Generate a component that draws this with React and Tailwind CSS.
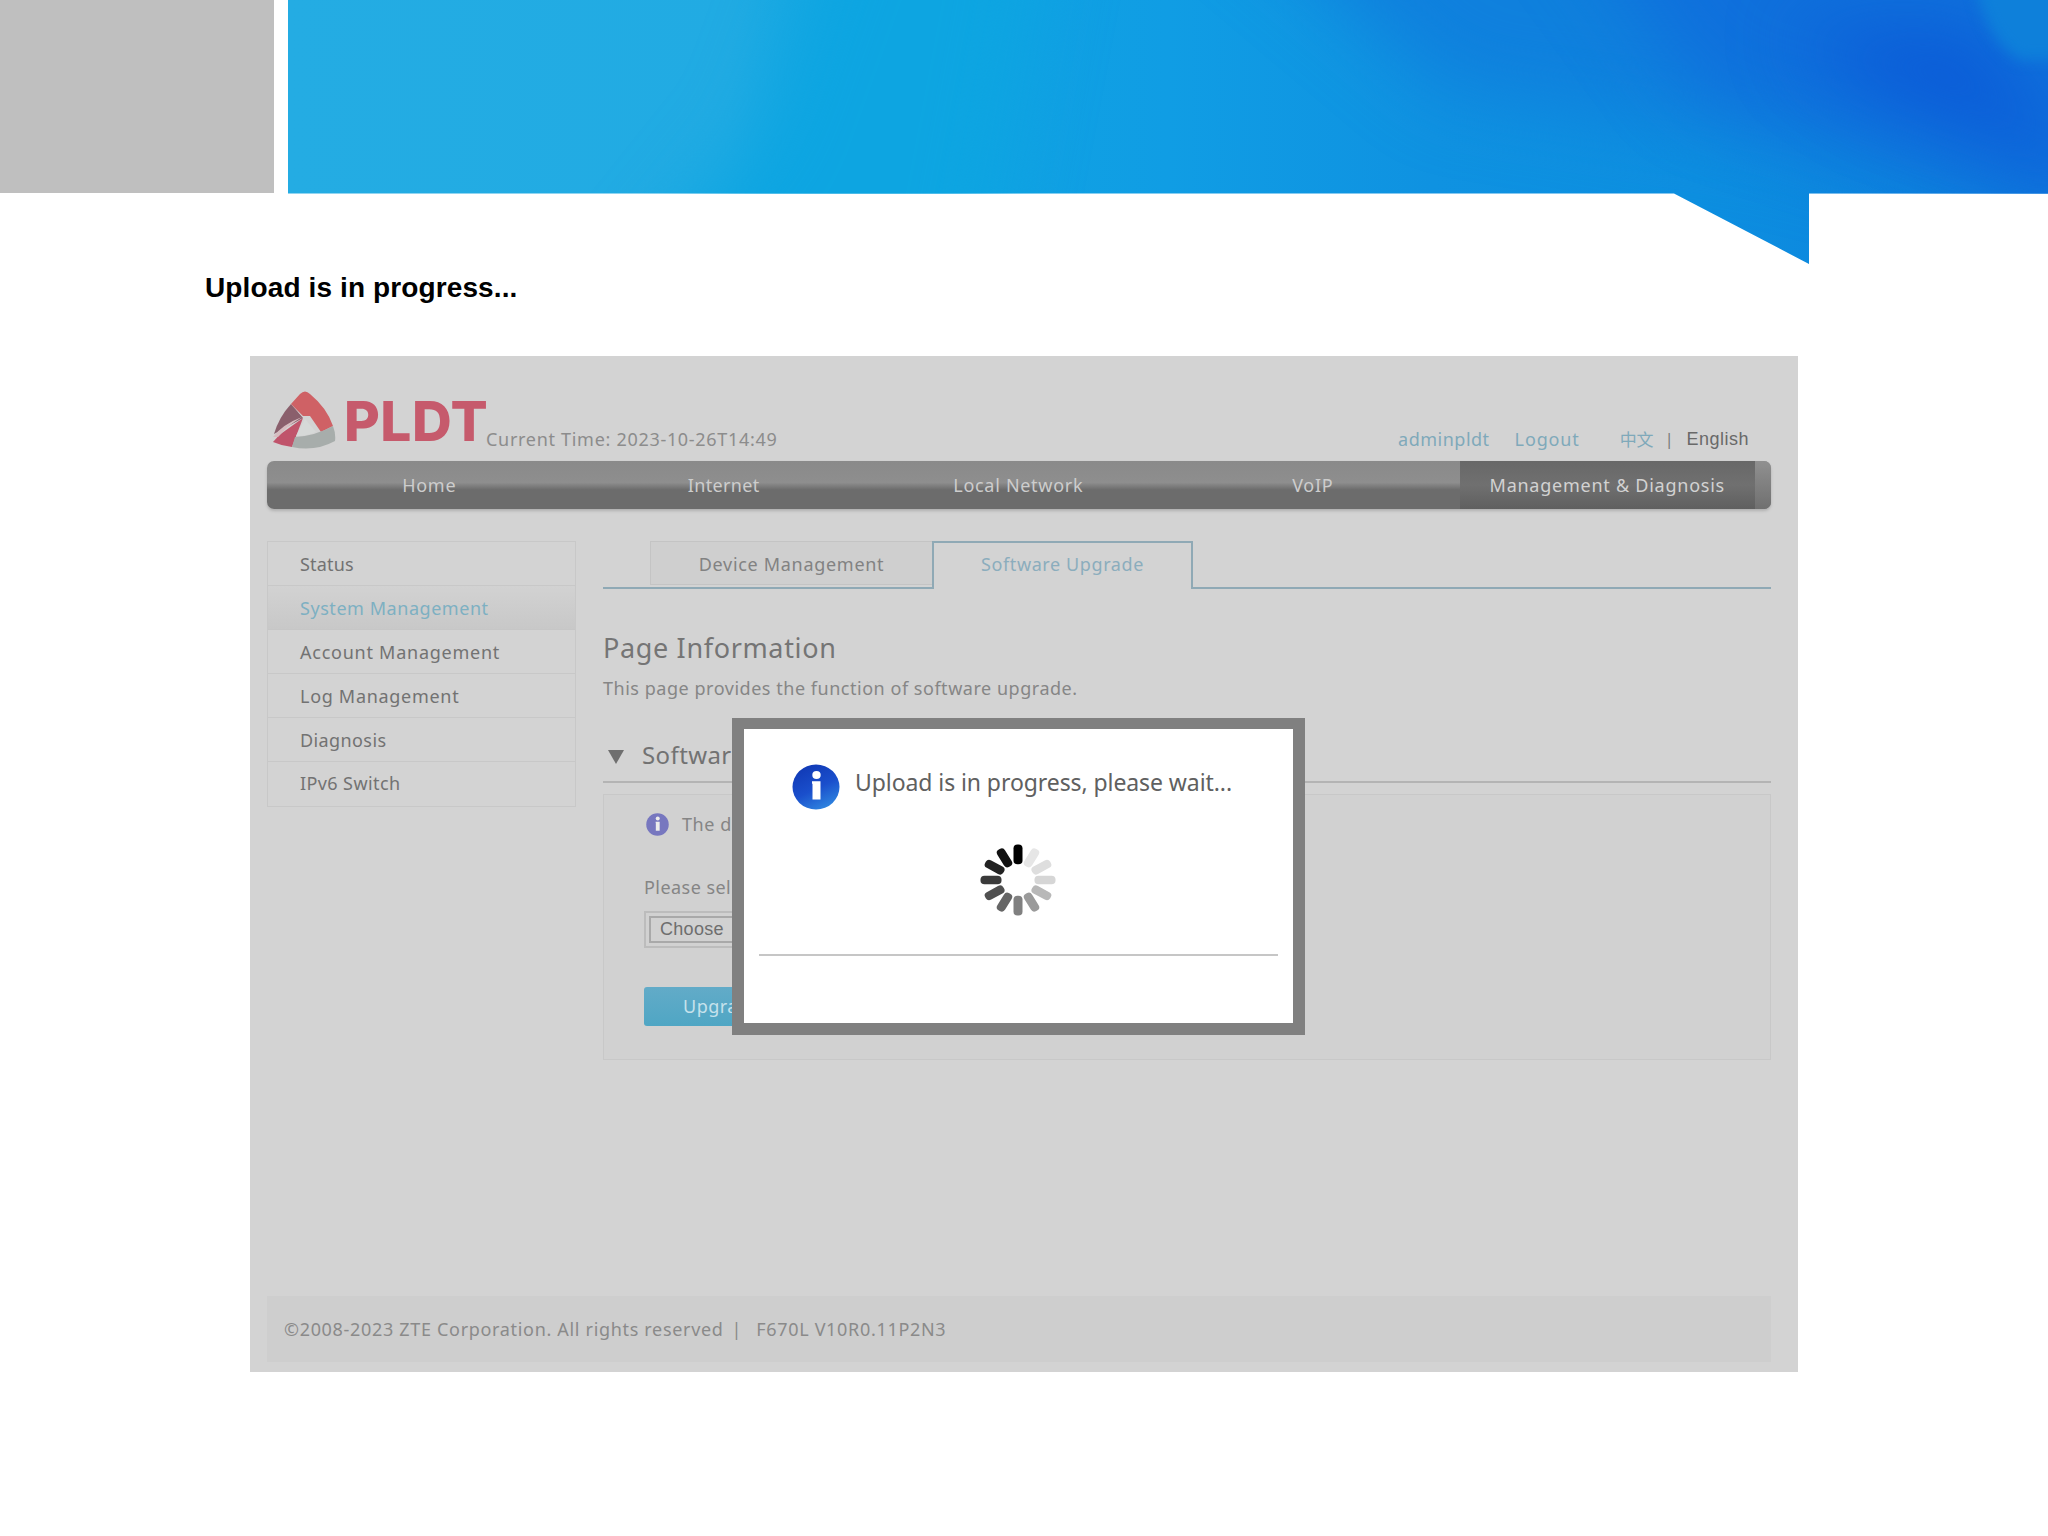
const navItems = [
  { label: "Home", spacing: "tracking-[0.7px]" },
  { label: "Internet", spacing: "tracking-[0.35px]" },
  { label: "Local Network", spacing: "tracking-[0.7px]" },
  { label: "VoIP", spacing: "tracking-[0.7px]" },
  { label: "Management & Diagnosis", spacing: "tracking-[0.75px]", active: true },
];

const sideItems = [
  { label: "Status", spacing: "tracking-[0.2px]" },
  { label: "System Management", spacing: "tracking-[0.55px]", active: true },
  { label: "Account Management", spacing: "tracking-[0.75px]" },
  { label: "Log Management", spacing: "tracking-[0.7px]" },
  { label: "Diagnosis", spacing: "tracking-[0.4px]" },
  { label: "IPv6 Switch", spacing: "tracking-[0.4px]" },
];

// clockwise from twelve o'clock
const spokes = ["#000000", "#e6e6e6", "#dedede", "#d6d6d6", "#b8b8b8", "#9a9a9a", "#808080", "#666666", "#505050", "#3a3a3a", "#222222", "#111111"];

function Banner() {
  return (
    <header className="flex h-[264px] gap-[14px]">
      <div className="h-[193px] w-[274px] shrink-0 bg-[#bfbfbf]" />
      <svg width="1760" height="264" viewBox="288 0 1760 264" className="shrink-0">
        <defs>
          <linearGradient id="sky" gradientUnits="userSpaceOnUse" x1="288" y1="0" x2="2048" y2="0">
            <stop offset="0" stopColor="#24ace3" />
            <stop offset="0.25" stopColor="#21abe3" />
            <stop offset="0.34" stopColor="#0fa5e2" />
            <stop offset="0.5" stopColor="#109de4" />
            <stop offset="0.65" stopColor="#0f92e1" />
            <stop offset="0.8" stopColor="#0d8fe0" />
            <stop offset="1" stopColor="#0c80dd" />
          </linearGradient>
          <clipPath id="shape">
            <path d="M288 0H2048V193.500H1809V264L1674 193.500H288Z" />
          </clipPath>
          <filter id="soft" filterUnits="userSpaceOnUse" x="288" y="-200" width="2000" height="700" colorInterpolationFilters="sRGB">
            <feGaussianBlur stdDeviation="36" />
          </filter>
          <filter id="fine" filterUnits="userSpaceOnUse" x="1800" y="-100" width="400" height="300" colorInterpolationFilters="sRGB">
            <feGaussianBlur stdDeviation="7" />
          </filter>
        </defs>
        <g clipPath="url(#shape)">
          <rect x="288" width="1760" height="264" fill="url(#sky)" />
          <path d="M860 -150H1060L960 380H560L760 130Z" fill="#0da5e1" filter="url(#soft)" />
          <path d="M1130 -180H2250V260L1960 190L1760 140L1450 90Z" fill="#0f80dd" filter="url(#soft)" />
          <path d="M1500 -180H2250V290L2040 210L1880 150L1700 90Z" fill="#0f70dc" filter="url(#soft)" />
          <path d="M1790 30L1970 30L2100 190L2000 140L1870 90Z" fill="#0b5ad7" filter="url(#soft)" />
          <path d="M1975 -20H2060V60L2020 60Q1985 40 1975 -20Z" fill="#0e80da" filter="url(#fine)" />
        </g>
      </svg>
    </header>
  );
}

function PldtMark() {
  return (
    <svg width="63" height="58" viewBox="0 0 63 58" className="mb-[2px]">
      <path d="M18 13Q6 26 1 43L30 27Z" fill="#8a5f6c" />
      <path d="M18 13L27 3Q32 -2 37 3Q54 17 60 35L48 41L37 25H30Z" fill="#cf6165" />
      <path d="M30 27L19 56Q9 55 0 51Q4 46 9 42Z" fill="#c0546b" />
      <path d="M0 46Q10 33 29 26Q14 35 5 46Z" fill="#d6bcc0" />
      <path d="M60 35Q63 43 62 50Q42 61 19 56L22 46Q42 45 60 35Z" fill="#a7adab" />
      <path d="M23 45L32 28L43 41Q34 45 23 45Z" fill="#d6d9d8" />
    </svg>
  );
}

function InfoIcon({ width, height, faded }) {
  return (
    <svg width={width} height={height} viewBox="0 0 48 48" preserveAspectRatio="none" className={faded ? "shrink-0 opacity-60" : "shrink-0"}>
      <defs>
        <linearGradient id="ball" x1="0.2" y1="0" x2="0.7" y2="1">
          <stop offset="0" stopColor="#1038b4" />
          <stop offset="0.55" stopColor="#1a4fcc" />
          <stop offset="1" stopColor="#2f86e0" />
        </linearGradient>
      </defs>
      <circle cx="24" cy="24" r="23.500" fill={faded ? "#3c3cb4" : "url(#ball)"} />
      <circle cx="24.500" cy="11.500" r="4.200" fill="#ffffff" />
      <path d="M20 18H28.500V37H20.500V20.500H20Z" fill="#ffffff" />
    </svg>
  );
}

function Spinner() {
  return (
    <svg width="76" height="72" viewBox="-38 -38 76 76" preserveAspectRatio="none">
      {spokes.map((color, i) => (
        <rect key={color} x="-4.500" y="-37.500" width="9" height="21" rx="4" fill={color} transform={`rotate(${i * 30})`} />
      ))}
    </svg>
  );
}

function TopBar() {
  return (
    <div className="flex h-[105px] items-end justify-between pr-[22px] pb-[10px] pl-[6px]">
      <div className="flex items-end">
        <PldtMark />
        <span className="mb-[2px] ml-[8px] w-[148px] font-['Inter',sans-serif] text-[55px] leading-[56px] font-extrabold tracking-[0.5px] text-[#c65a6c]">PLDT</span>
        <span className="-ml-[6px] text-[18px] leading-[24px] tracking-[0.7px] text-[#8c8c8c]">Current Time: 2023-10-26T14:49</span>
      </div>
      <div className="flex items-center text-[18px] leading-[24px] text-[#7fa9ba]">
        <span className="tracking-[0.5px]">adminpldt</span>
        <span className="ml-[25px] tracking-[0.85px]">Logout</span>
        <span className="ml-[40px] font-['Noto_Sans_CJK_SC',sans-serif] text-[17px]">中文</span>
        <span className="ml-[11px] text-[16px] text-[#777777]">|</span>
        <span className="ml-[13px] font-['Liberation_Sans',sans-serif] tracking-[0.5px] text-[#696969]">English</span>
      </div>
    </div>
  );
}

function NavBar() {
  return (
    <nav className="flex h-[48px] overflow-hidden rounded-[7px] bg-linear-to-b from-[#8a8a8a] via-[#8e8e8e] via-45% to-[#6c6c6c] to-60% pl-[15px] text-[18px] text-[#cdcdcd] shadow-[0_2px_3px_#b0b0b0]">
      {navItems.map((item) => (
        <div
          key={item.label}
          className={
            item.active
              ? "flex w-[294.5px] items-center justify-center bg-linear-to-b from-[#686868] via-[#707070] to-[#5f5f5f] text-[#d2d2d2]"
              : "flex w-[294.5px] items-center justify-center"
          }
        >
          <span className={item.spacing}>{item.label}</span>
        </div>
      ))}
      <div className="flex-1 bg-linear-to-b from-[#909090] to-[#707070]" />
    </nav>
  );
}

function Sidebar() {
  return (
    <aside className="w-[309px] shrink-0 self-start border border-[#c8c8c8] text-[18px] text-[#727272]">
      {sideItems.map((item) => (
        <div
          key={item.label}
          className={
            item.active
              ? "flex h-[44px] items-center border-b border-[#c6c6c6] bg-linear-to-b from-[#d2d2d2] to-[#c8c8c8] pt-px pl-[32px] text-[#7db0c2]"
              : "flex h-[44px] items-center border-b border-[#c8c8c8] pt-px pl-[32px] last:border-b-0 last:pt-0 last:pb-px"
          }
        >
          <span className={item.spacing}>{item.label}</span>
        </div>
      ))}
    </aside>
  );
}

function UpgradeForm() {
  return (
    <div className="mt-[11px] h-[266px] border border-[#c8c8c8] bg-[#d1d1d1] pt-[17px] pl-[40px] text-[18px] text-[#858585]">
      <div className="flex h-[24px] items-center gap-[13px] pl-[2px]">
        <InfoIcon width="23" height="23" faded />
        <span className="tracking-[0.6px]">The d</span>
      </div>
      <p className="mt-[38px] leading-[26px] tracking-[0.45px]">Please sel</p>
      <div className="mt-[11px] flex h-[37px] w-[200px] items-center border-2 border-[#bcbcbc] pl-[3px]">
        <div className="flex h-[27px] w-[110px] items-center border-2 border-[#a9a9a9] pl-[9px] font-['Liberation_Sans',sans-serif] tracking-[0.3px] text-[#6e6e6e]">Choose</div>
      </div>
      <div className="mt-[39px] flex h-[39px] w-[144px] items-center rounded-[3px] bg-linear-to-b from-[#62abc8] to-[#4fa6c4] pl-[39px] tracking-[0.5px] text-[#c6e2ec]">Upgrade</div>
    </div>
  );
}

function UploadDialog() {
  return (
    <div className="absolute top-[362px] left-[482px] h-[317px] w-[573px] border-[12px] border-t-[11px] border-[#808080] bg-white">
      <div className="flex pt-[35px] pl-[48px]">
        <InfoIcon width="48" height="46" />
        <p className="ml-[15px] text-[23px] leading-[36px] tracking-[-0.08px] text-[#606060]">Upload is in progress, please wait...</p>
      </div>
      <div className="mt-[34px] flex justify-center pr-[2px]">
        <Spinner />
      </div>
      <div className="mx-[15px] mt-[38px] h-[2px] bg-[#c6c6c6]" />
    </div>
  );
}

function MainPanel() {
  return (
    <main className="ml-[27px] flex-1">
      <div className="flex h-[48px] items-end text-[18px]">
        <div className="h-full w-[47px] border-b-2 border-[#8fa9b5]" />
        <div className="h-full w-[282px] border-b-2 border-[#8fa9b5]">
          <div className="flex h-[44px] items-center justify-center border border-r-0 border-[#c4c4c4] bg-[#cfcfcf] pt-[2px] tracking-[0.7px] text-[#828282]">
            Device Management
          </div>
        </div>
        <div className="flex h-full w-[261px] items-center justify-center border-2 border-b-0 border-[#8fa9b5] pb-[3px] tracking-[0.6px] text-[#8badbd]">Software Upgrade</div>
        <div className="h-full flex-1 border-b-2 border-[#8fa9b5]" />
      </div>
      <h1 className="mt-[39px] text-[27px] leading-[40px] tracking-[0.65px] text-[#757575]">Page Information</h1>
      <p className="mt-[7px] text-[18px] leading-[26px] tracking-[0.53px] text-[#868686]">This page provides the function of software upgrade.</p>
      <div className="mt-[32px] flex h-[50px] items-center border-b-2 border-[#b4b4b4] pb-[4px] pl-[5px] text-[#727272]">
        <svg width="16" height="14" viewBox="0 0 16 14" className="mt-[4px]">
          <path d="M0 0H16L8 14Z" fill="#6f6f6f" />
        </svg>
        <span className="ml-[18px] text-[24px] tracking-[0.4px]">Softwar</span>
      </div>
      <UpgradeForm />
    </main>
  );
}

export default function App() {
  return (
    <div className="h-[1536px] w-[2048px] overflow-hidden bg-white font-['Noto_Sans',sans-serif]">
      <Banner />
      <h2 className="mt-[4px] ml-[205px] font-['Liberation_Sans',sans-serif] text-[28px] leading-[40px] font-bold tracking-[0.12px] text-black">Upload is in progress...</h2>
      <section className="relative mt-[48px] ml-[250px] flex h-[1016px] w-[1548px] flex-col bg-[#d3d3d3] px-[17px] pr-[27px]">
        <TopBar />
        <NavBar />
        <div className="mt-[32px] flex">
          <Sidebar />
          <MainPanel />
        </div>
        <footer className="mt-auto mb-[10px] flex h-[66px] items-center bg-[#cecece] pl-[17px] text-[18px] tracking-[0.68px] text-[#8a8a8a]">
          <span>©2008-2023 ZTE Corporation. All rights reserved</span>
          <span className="ml-[8px]">|</span>
          <span className="ml-[14px]">F670L V10R0.11P2N3</span>
        </footer>
        <UploadDialog />
      </section>
    </div>
  );
}
